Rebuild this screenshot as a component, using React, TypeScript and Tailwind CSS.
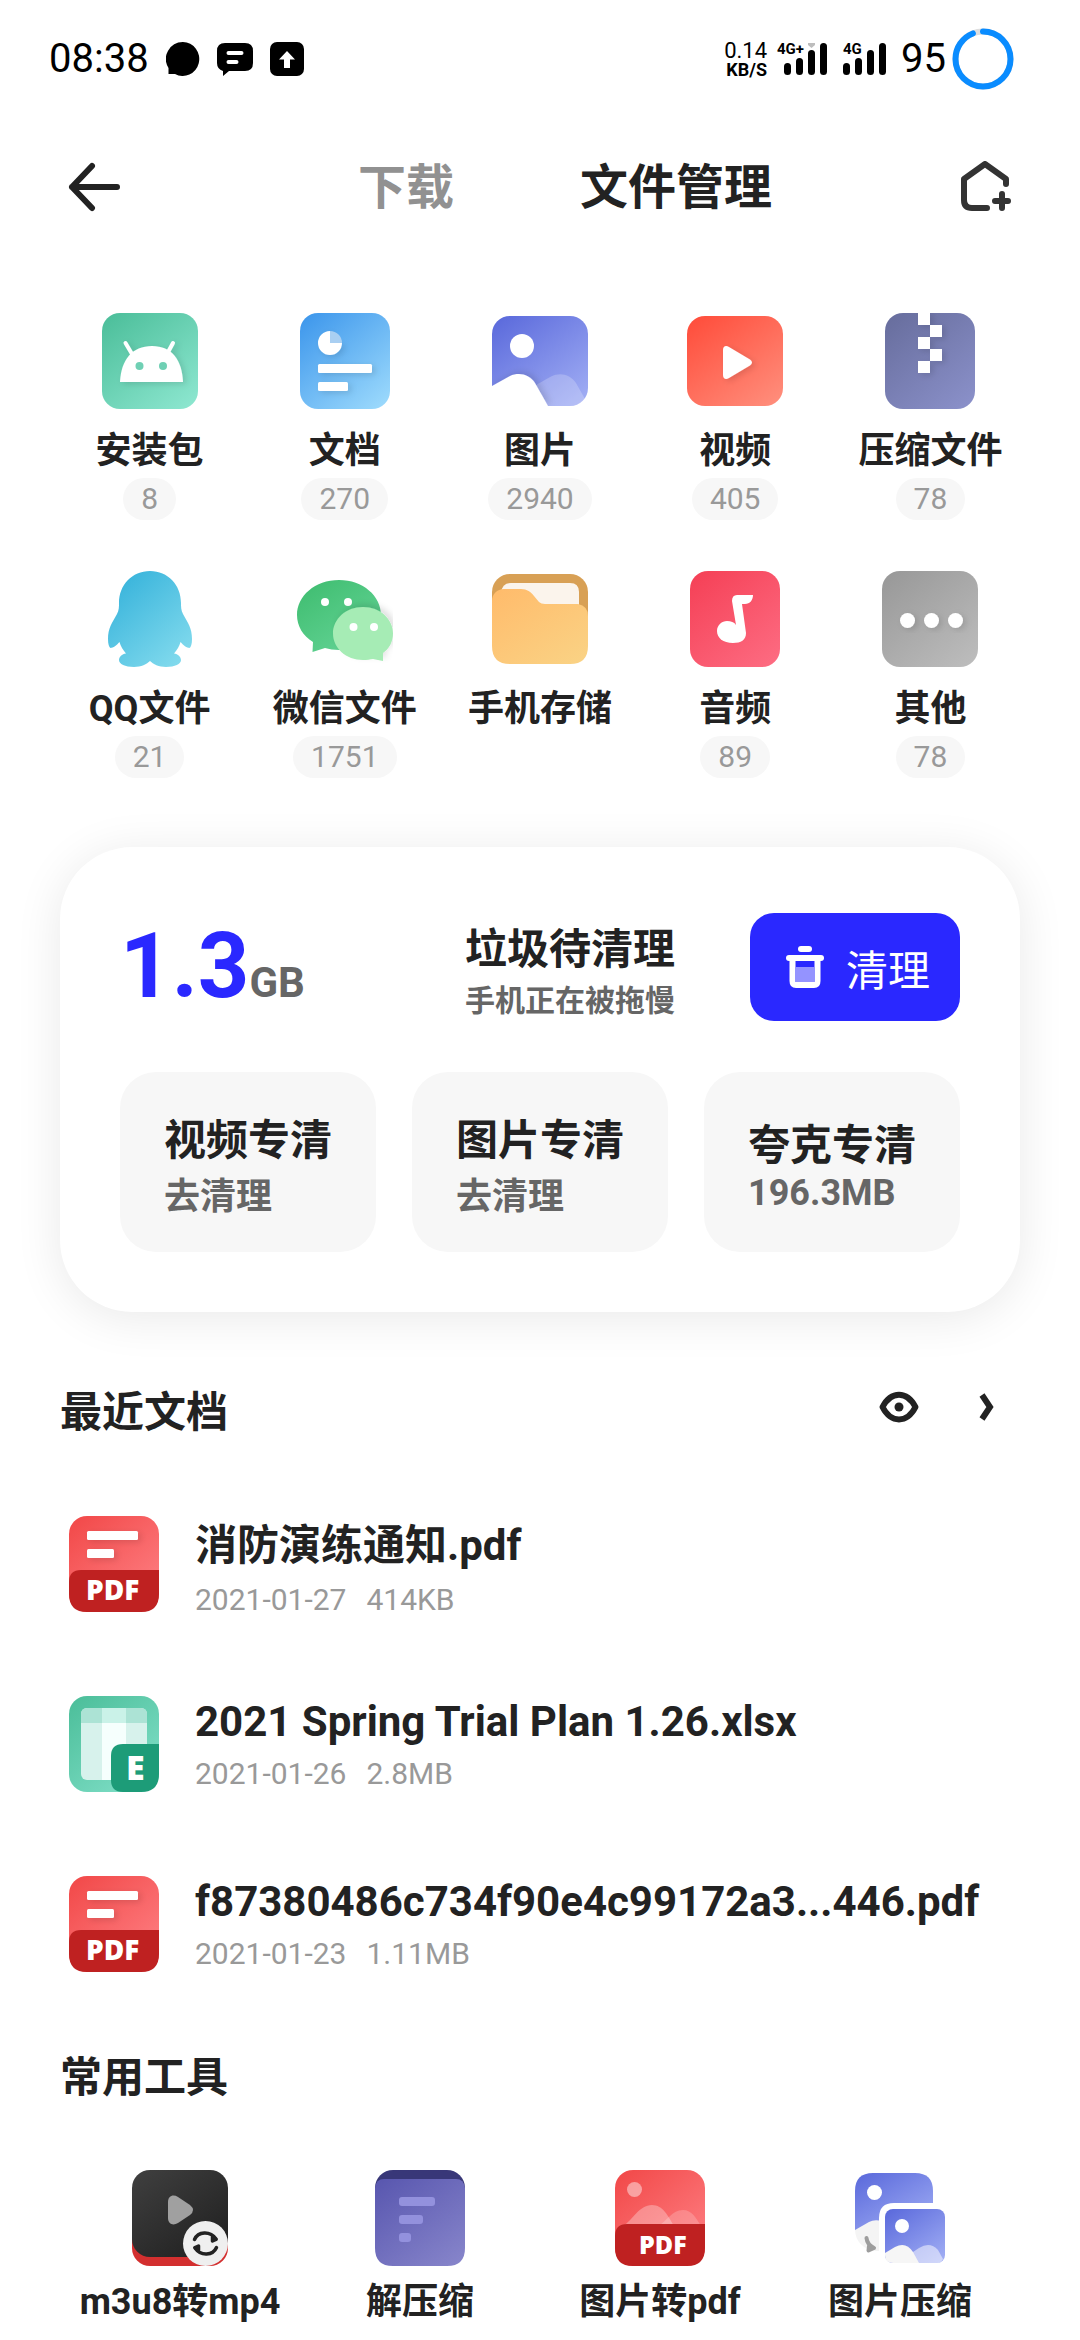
import type { ReactNode } from 'react';

type IconProps = { children: ReactNode; from: string; to: string; id: string; shadowY?: number };

// Every file / tool icon is drawn on the same 96px canvas
function Icon({ children, from, to, id, shadowY = 2 }: IconProps) {
  return (
    <svg viewBox="0 0 96 96" className="w-24 h-24 shrink-0" aria-hidden="true">
      <defs>
        <linearGradient id={id} x1="0.1" y1="0" x2="0.9" y2="1">
          <stop offset="0" stopColor={from} />
          <stop offset="1" stopColor={to} />
        </linearGradient>
        <filter id={`${id}-shadow`} x="-30%" y="-30%" width="160%" height="160%">
          <feDropShadow dx="3" dy={shadowY} stdDeviation="3" floodColor="#000" floodOpacity="0.12" />
        </filter>
      </defs>
      {children}
    </svg>
  );
}

function ApkIcon() {
  return (
    <Icon id="apk" from="#4dbf9b" to="#8ce6cf">
      <rect width="96" height="96" rx="18" fill="url(#apk)" />
      <g filter="url(#apk-shadow)">
        <path d="M18 69C19 47 30 33 50 33S80 47 81 69Z" fill="#fff" />
        <path d="M23.500 30L30 41M71 30L65 41" stroke="#fff" strokeWidth="4" strokeLinecap="round" />
      </g>
      <circle cx="37.500" cy="53" r="4" fill="#6fd0b4" />
      <circle cx="61" cy="53" r="4" fill="#6fd0b4" />
    </Icon>
  );
}

function DocIcon() {
  return (
    <Icon id="doc" from="#3f98ec" to="#9bd9fc">
      <rect x="3" width="90" height="96" rx="18" fill="url(#doc)" />
      <g filter="url(#doc-shadow)" fill="#fff">
        <path d="M33 18A12 12 0 1 0 45 30H33Z" />
        <rect x="21" y="51" width="54" height="9" rx="1.500" />
        <rect x="21" y="69" width="30" height="9" rx="1.500" />
      </g>
      <path d="M33 18A12 12 0 0 1 45 30H33Z" fill="#a9cff2" />
    </Icon>
  );
}

function ImageIcon() {
  return (
    <Icon id="img" from="#5c6bdc" to="#a0adf4" shadowY={-2}>
      <clipPath id="img-clip">
        <rect y="3" width="96" height="90" />
      </clipPath>
      <rect y="3" width="96" height="90" rx="18" fill="url(#img)" />
      <path d="M44 72L59 63.500C68 59 78 61 84 70L93 86Q88 93 78 93H50Z" fill="#fff" opacity="0.22" />
      <g clipPath="url(#img-clip)">
        <path d="M0 73L18 63C27 59 37 61 43 70L56 93H0Z" fill="#fff" filter="url(#img-shadow)" />
      </g>
      <circle cx="30" cy="33" r="12" fill="#fff" />
    </Icon>
  );
}

function VideoIcon() {
  return (
    <Icon id="vid" from="#ff4e3c" to="#ff8d7b">
      <rect y="3" width="96" height="90" rx="18" fill="url(#vid)" />
      <path
        d="M36 37C36 33 39 32 42 34L63 46.500Q67 49.500 63 52.500L42 65C39 67 36 66 36 62Z"
        fill="#fff"
        filter="url(#vid-shadow)"
      />
    </Icon>
  );
}

function ZipIcon() {
  return (
    <Icon id="zip" from="#686e9e" to="#8a90c9">
      <rect x="3" width="90" height="96" rx="18" fill="url(#zip)" />
      <path
        d="M36 0H48V12H36ZM48 12H60V24H48ZM36 24H48V36H36ZM48 36H60V48H48ZM36 48H48V60H36Z"
        fill="#fff"
        filter="url(#zip-shadow)"
      />
    </Icon>
  );
}

function QQIcon() {
  return (
    <Icon id="qq" from="#33b1da" to="#85dcee">
      <path
        d="M48 0C30 0 17 14 17 32C17 36 17 39 15 43C10 52 6 57 6 68C6 73 7 76 8.500 77C11 77 15 74 17.500 71C18.500 75 21 79 24 82.500C20 83 17 86 17 89C17 93 23 96 32 96C39 96 45 93 48 90C51 93 57 96 64 96C73 96 79 93 79 89C79 86 76 83 72 82.500C75 79 77.500 75 78.500 71C81 74 85 77 87.500 77C89 76 90 73 90 68C90 57 86 52 81 43C79 39 79 36 79 32C79 14 66 0 48 0Z"
        fill="url(#qq)"
      />
    </Icon>
  );
}

function WechatIcon() {
  return (
    <Icon id="wx" from="#3fbd70" to="#66d598" shadowY={-3}>
      <path
        d="M42 9C18 9 0 25 0 44C0 55 6 65 16 71L15.500 81L28 77C32 78 37 79 42 79C66 79 84 63 84 44C84 25 66 9 42 9Z"
        fill="url(#wx)"
      />
      <circle cx="28" cy="31" r="4" fill="#fff" />
      <circle cx="51" cy="31" r="4" fill="#fff" />
      <path
        d="M66 36C49 36 36 48 36 62.500C36 77 49 89 66 89C70 89 73 88.500 76 88L86 90V82C92 78 96 71 96 62.500C96 48 83 36 66 36Z"
        fill="#a6ecb5"
        filter="url(#wx-shadow)"
      />
      <circle cx="56.500" cy="56" r="4" fill="#fff" />
      <circle cx="77" cy="56" r="4" fill="#fff" />
    </Icon>
  );
}

function FolderIcon() {
  return (
    <Icon id="dir" from="#ffbc6c" to="#fad284">
      <rect y="3" width="96" height="80" rx="18" fill="#d8a055" />
      <path d="M9 22Q10 12 19 12H78Q87 12 87 21V40H9Z" fill="#fbf4ec" />
      <path
        d="M0 30C0 23 5 18 12 18H29C35 18 39 21 42 25L47 31Q49 33 53 33H86Q96 35 96 45V75Q96 93 78 93H18Q0 93 0 75Z"
        fill="url(#dir)"
      />
    </Icon>
  );
}

function AudioIcon() {
  return (
    <Icon id="aud" from="#f54157" to="#fd6b81">
      <rect x="3" width="90" height="96" rx="18" fill="url(#aud)" />
      <path
        d="M50 24H66C66 29 63 33 58 33H55L59 62C59 69 54 72 46 72C36 72 30 67 30 60C30 54 35 50 40 50C44 50 47 51 49 54L45 30Q45 24 50 24Z"
        fill="#fff"
      />
    </Icon>
  );
}

function OtherIcon() {
  return (
    <Icon id="oth" from="#999999" to="#bcbcbc">
      <rect width="96" height="96" rx="18" fill="url(#oth)" />
      <g fill="#fff" filter="url(#oth-shadow)">
        <circle cx="25.500" cy="49.500" r="7.500" />
        <circle cx="49.500" cy="49.500" r="7.500" />
        <circle cx="73.500" cy="49.500" r="7.500" />
      </g>
    </Icon>
  );
}

function PdfIcon({ id }: { id: string }) {
  return (
    <Icon id={id} from="#f24a4a" to="#ff8286">
      <rect x="3" width="90" height="96" rx="18" fill={`url(#${id})`} />
      <g fill="#fff" filter={`url(#${id}-shadow)`}>
        <rect x="21" y="15" width="51" height="9" rx="1.500" />
        <rect x="21" y="33" width="27" height="9" rx="1.500" />
      </g>
      <path d="M3 66Q3 54 15 54H93V78Q93 96 75 96H21Q3 96 3 78Z" fill="#bf2121" />
      <text x="20" y="84" fontSize="28" fontWeight="800" fill="#fff" className="font-['Open_Sans',sans-serif]">
        PDF
      </text>
    </Icon>
  );
}

function ExcelIcon() {
  return (
    <Icon id="xls" from="#4dbf9b" to="#82e0c9">
      <rect x="3" width="90" height="96" rx="18" fill="url(#xls)" />
      <rect x="15" y="12" width="66" height="72" rx="6" fill="#d7f2ec" />
      <path d="M15 27V18Q15 12 21 12H75Q81 12 81 18V27Z" fill="#ace3d5" />
      <rect x="36" y="27" width="24" height="57" fill="#f6fffd" />
      <rect x="36" y="12" width="24" height="15" fill="#caf2e8" />
      <path d="M45 60Q45 48 57 48H93V78Q93 96 75 96H57Q45 96 45 84Z" fill="#1d9c78" />
      <text x="60" y="84" fontSize="34" fontWeight="800" fill="#fff" className="font-['Open_Sans',sans-serif]">
        E
      </text>
    </Icon>
  );
}

function M3u8Icon() {
  return (
    <Icon id="m3u" from="#3e3e3e" to="#202020">
      <rect y="10" width="96" height="86" rx="18" fill="#d32f2f" />
      <rect width="96" height="87" rx="18" fill="url(#m3u)" />
      <path d="M36 32C36 26 41 24 46 27L58 35Q64 40 58 45L46 53C41 56 36 54 36 48Z" fill="#a0a0a0" />
      <circle cx="73.500" cy="73.500" r="22.500" fill="#efefef" />
      <g stroke="#222" fill="none" strokeWidth="3.500" strokeLinecap="round" strokeLinejoin="round">
        <path d="M62.500 69.500C66 61.500 78 60.500 84 69" />
        <path d="M84.500 77.500C81 85.500 69 86.500 63 78" />
        <path d="M84 69.500L80.500 71V67Z" fill="#222" />
        <path d="M63 77.500L66.500 76V80Z" fill="#222" />
      </g>
    </Icon>
  );
}

function UnzipIcon() {
  return (
    <Icon id="unz" from="#5a58b0" to="#8684ca">
      <rect x="3" width="90" height="60" rx="18" fill="#383778" />
      <path d="M3 18Q4 9 12 9H84Q92 9 93 18V78Q93 96 75 96H21Q3 96 3 78Z" fill="url(#unz)" />
      <g fill="#9391dd">
        <rect x="27" y="27" width="36" height="9" rx="3" />
        <rect x="27" y="45" width="24" height="9" rx="3" />
        <rect x="27" y="63" width="12" height="9" rx="3" />
      </g>
    </Icon>
  );
}

function ImageToPdfIcon() {
  return (
    <Icon id="i2p" from="#f24a4a" to="#ff8286">
      <rect x="3" width="90" height="96" rx="18" fill="url(#i2p)" />
      <g fill="#fff">
        <circle cx="22.500" cy="19.500" r="7.500" opacity="0.45" />
        <path d="M11 56C21 50 27 35 40 35C51 35 56 46 62 56Z" opacity="0.3" />
        <path d="M46 56C55 51 60 40 71 40C80 40 84 48 89 56Z" opacity="0.2" />
      </g>
      <path d="M3 66Q3 54 15 54H93V78Q93 96 75 96H21Q3 96 3 78Z" fill="#bf2121" />
      <text x="27" y="84" fontSize="25" fontWeight="800" fill="#fff" className="font-['Open_Sans',sans-serif]">
        PDF
      </text>
    </Icon>
  );
}

function CompressIcon() {
  return (
    <Icon id="cmp" from="#5c6bdc" to="#a0adf4">
      <path d="M3 60V21Q3 3 21 3H63Q81 3 81 21V60Z" fill="url(#cmp)" />
      <path d="M3 60L17 52Q22 49 30 51V81H24Q4 78 3 60Z" fill="#f4f4f4" />
      <path d="M14.500 68C15 73 18 76 22 78L16.500 80.500L17 76" stroke="#9d9d9d" strokeWidth="4" fill="none" strokeLinecap="round" strokeLinejoin="round" />
      <circle cx="22.500" cy="22.500" r="7.500" fill="#fff" />
      <path d="M27 96V48Q27 33 42 33H96V96Z" fill="#fff" />
      <rect x="33" y="39" width="60" height="54" rx="8" fill="url(#cmp)" />
      <path d="M58 84L67 78Q78 71 86 80L91 89Q89 93 85 93H55Z" fill="#fff" opacity="0.5" />
      <path d="M33 83L43 77Q54 71 61 82L67 93H41Q33 93 33 85Z" fill="#f6f6f6" />
      <circle cx="50" cy="56" r="7" fill="#fff" />
    </Icon>
  );
}

function SignalBars({ label, roaming }: { label: string; roaming?: boolean }) {
  return (
    <svg viewBox="0 0 50 34" className="w-[50px] h-[34px] overflow-visible" aria-hidden="true">
      <text x={roaming ? 0 : 7} y="12" fontSize="15" fontWeight="700" className="font-['Roboto',sans-serif]">
        {label}
      </text>
      <rect x="7" y="21" width="7" height="12" rx="3.500" />
      <rect x="19" y="16" width="7" height="17" rx="3.500" />
      <rect x="31" y="8" width="7" height="25" rx="3.500" />
      <rect x="43" y="1" width="7" height="32" rx="3.500" />
      {roaming && <path d="M31 1H38V3L34.500 6L31 3Z" fill="#bdbdbd" />}
    </svg>
  );
}

function StatusBar() {
  return (
    <div className="flex items-center justify-between h-[117px] pl-[49px] pr-[66px] text-black">
      <div className="flex items-center gap-[17px]">
        <span className="text-[40px] leading-none">08:38</span>
        <svg viewBox="0 0 34 34" className="w-[34px] h-[34px]" aria-hidden="true">
          <path d="M17 0A16.500 17 0 1 1 9 32H2.500V26A17 17 0 0 1 17 0Z" />
        </svg>
        <svg viewBox="0 0 36 34" className="w-9 h-[34px]" aria-hidden="true">
          <path d="M8 1H28Q36 1 36 9V21Q36 29 28 29H12L6 34V29Q0 27 0 21V9Q0 1 8 1Z" />
          <path d="M11.500 11H24.500M11.500 20H19.500" stroke="#fff" strokeWidth="4" strokeLinecap="round" />
        </svg>
        <svg viewBox="0 0 34 34" className="w-[34px] h-[34px]" aria-hidden="true">
          <rect width="34" height="34" rx="7" />
          <path d="M17 9L25 17.500H20V26H14V17.500H9Z" fill="#fff" />
        </svg>
      </div>
      <div className="flex items-center">
        <div className="flex flex-col items-end">
          <span className="text-[22px] leading-[22px]">0.14</span>
          <span className="text-[18px] leading-[16px] font-bold">KB/S</span>
        </div>
        <div className="flex gap-[9px] ml-[10px]">
          <SignalBars label="4G+" roaming />
          <SignalBars label="4G" />
        </div>
        <span className="text-[40px] leading-none ml-[15px]">95</span>
        <svg viewBox="0 0 62 62" className="w-[62px] h-[62px] ml-[6px]" aria-hidden="true">
          <circle cx="31" cy="31" r="27.500" fill="none" stroke="#dedede" strokeWidth="6" />
          <circle
            cx="31"
            cy="31"
            r="27.500"
            fill="none"
            stroke="#0a8cff"
            strokeWidth="6"
            strokeLinecap="round"
            pathLength="100"
            strokeDasharray="94 6"
            transform="rotate(-90 31 31)"
          />
        </svg>
      </div>
    </div>
  );
}

function Header() {
  return (
    <header className="flex items-center h-[141px] pl-[68px] pr-[66px]">
      <button type="button" aria-label="返回">
        <svg viewBox="0 0 54 54" className="w-[54px] h-[54px]" fill="none" stroke="#222" strokeWidth="6" strokeLinecap="round" strokeLinejoin="round">
          <path d="M24 5L4 26L24 47M4 26H49" />
        </svg>
      </button>
      <nav className="flex gap-[126px] ml-[236px] text-[48px] leading-[72px] font-bold">
        <button type="button" className="text-[#919191]">下载</button>
        <button type="button" aria-current="page">文件管理</button>
      </nav>
      <button type="button" aria-label="添加到桌面" className="ml-auto">
        <svg viewBox="0 0 54 54" className="w-[54px] h-[54px]" fill="none" stroke="#333" strokeWidth="6" strokeLinecap="round" strokeLinejoin="round">
          <path d="M46 23V18L25 3L4 18V39Q4 47 12 47H27M35 40H48M42 33V47" />
        </svg>
      </button>
    </header>
  );
}

const categories = [
  { name: '安装包', count: 8, icon: <ApkIcon /> },
  { name: '文档', count: 270, icon: <DocIcon /> },
  { name: '图片', count: 2940, icon: <ImageIcon /> },
  { name: '视频', count: 405, icon: <VideoIcon /> },
  { name: '压缩文件', count: 78, icon: <ZipIcon /> },
  { name: 'QQ文件', count: 21, icon: <QQIcon /> },
  { name: '微信文件', count: 1751, icon: <WechatIcon /> },
  { name: '手机存储', icon: <FolderIcon /> },
  { name: '音频', count: 89, icon: <AudioIcon /> },
  { name: '其他', count: 78, icon: <OtherIcon /> },
];

const cleaners = [
  { name: '视频专清', detail: '去清理' },
  { name: '图片专清', detail: '去清理' },
  { name: '夸克专清', detail: '196.3MB' },
];

const files = [
  { name: '消防演练通知.pdf', date: '2021-01-27', size: '414KB', icon: <PdfIcon id="pdf1" /> },
  { name: '2021 Spring Trial Plan 1.26.xlsx', date: '2021-01-26', size: '2.8MB', icon: <ExcelIcon /> },
  { name: 'f87380486c734f90e4c99172a3...446.pdf', date: '2021-01-23', size: '1.11MB', icon: <PdfIcon id="pdf2" /> },
];

const tools = [
  { name: 'm3u8转mp4', icon: <M3u8Icon /> },
  { name: '解压缩', icon: <UnzipIcon /> },
  { name: '图片转pdf', icon: <ImageToPdfIcon /> },
  { name: '图片压缩', icon: <CompressIcon /> },
];

function CleanCard() {
  return (
    <section className="mx-[60px] mt-[69px] px-[60px] pt-[66px] pb-[60px] rounded-[72px] bg-white shadow-[0_6px_48px_rgba(0,0,0,0.09)]">
      <div className="flex items-center">
        <div className="flex items-baseline">
          <span className="text-[90px] leading-none font-bold text-[#2a28ff]">1.3</span>
          <span className="text-[42px] leading-none font-bold text-[#666]">GB</span>
        </div>
        <div className="ml-auto">
          <h2 className="text-[42px] leading-[normal] font-bold">垃圾待清理</h2>
          <p className="text-[30px] leading-[normal] font-bold text-[#666]">手机正在被拖慢</p>
        </div>
        <button type="button" className="flex items-center justify-center gap-5 w-[210px] h-[108px] pl-1 ml-[75px] rounded-3xl bg-[#2a28ff] text-white text-[42px] leading-[normal]">
          <svg viewBox="0 0 42 42" className="w-[42px] h-[42px]" aria-hidden="true">
            <rect x="14" width="14" height="6" rx="3" fill="#fff" />
            <rect x="2" y="9" width="38" height="6" rx="3" fill="#fff" />
            <path d="M8.500 12V35Q8.500 39 12 39H30Q33.500 39 33.500 35V12" fill="none" stroke="#fff" strokeWidth="6" />
            <rect x="11.500" y="21" width="19" height="15" fill="#9493ff" />
          </svg>
          清理
        </button>
      </div>
      <div className="grid grid-cols-3 gap-9 mt-[51px]">
        {cleaners.map((item) => (
          <button key={item.name} type="button" className="flex flex-col justify-center h-[180px] pl-11 rounded-[36px] bg-[#f7f7f7] text-left font-bold">
            <span className="text-[42px] leading-[normal]">{item.name}</span>
            <span className="text-[36px] leading-[normal] text-[#666]">{item.detail}</span>
          </button>
        ))}
      </div>
    </section>
  );
}

export default function App() {
  return (
    <div className="min-h-screen bg-white text-[#222] font-['Roboto','Noto_Sans_CJK_SC',sans-serif]">
      <StatusBar />
      <Header />

      <main>
        <section className="grid grid-cols-5 gap-y-[51px] px-[52px] pt-[55px]">
          {categories.map((item) => (
            <button key={item.name} type="button" className="flex flex-col items-center">
              {item.icon}
              <span className="mt-[21px] text-[36px] leading-[42px] font-bold whitespace-nowrap">{item.name}</span>
              {item.count && (
                <span className="mt-[6px] px-[18px] rounded-full bg-[#f7f7f7] text-[30px] leading-[42px] text-[#999]">{item.count}</span>
              )}
            </button>
          ))}
        </section>

        <CleanCard />

        <section className="px-[60px] mt-[71px]">
          <div className="flex items-start">
            <h2 className="text-[42px] leading-[60px] font-bold">最近文档</h2>
            <button type="button" aria-label="显示或隐藏" className="ml-auto">
              <svg viewBox="0 0 42 48" className="w-[42px] h-12" aria-hidden="true">
                <path d="M4.500 24C13 7.500 29 7.500 37.500 24C29 40.500 13 40.500 4.500 24Z" fill="none" stroke="#222" strokeWidth="6" strokeLinejoin="round" />
                <circle cx="21" cy="24" r="4.500" fill="#222" />
              </svg>
            </button>
            <button type="button" aria-label="更多" className="ml-[46px] mr-3">
              <svg viewBox="0 0 42 48" className="w-[42px] h-12" aria-hidden="true">
                <path d="M16 12L24 24L16 36" fill="none" stroke="#222" strokeWidth="6" />
              </svg>
            </button>
          </div>
          <ul className="flex flex-col gap-[84px] mt-[73px]">
            {files.map((file) => (
              <li key={file.name}>
                <a href="#" className="flex items-center gap-[33px] h-24 pl-[6px]">
                  {file.icon}
                  <div className="min-w-0">
                    <p className="text-[42px] leading-[normal] font-bold whitespace-nowrap">{file.name}</p>
                    <p className="flex gap-5 mt-[10px] text-[30px] leading-[normal] text-[#999]">
                      <span>{file.date}</span>
                      <span>{file.size}</span>
                    </p>
                  </div>
                </a>
              </li>
            ))}
          </ul>
        </section>

        <section className="px-[60px] mt-[76px]">
          <h2 className="text-[42px] leading-[60px] font-bold">常用工具</h2>
          <div className="grid grid-cols-4 mt-[62px]">
            {tools.map((tool) => (
              <button key={tool.name} type="button" className="flex flex-col items-center">
                {tool.icon}
                <span className="mt-[15px] text-[36px] leading-[42px] font-bold whitespace-nowrap">{tool.name}</span>
              </button>
            ))}
          </div>
        </section>
      </main>
    </div>
  );
}
